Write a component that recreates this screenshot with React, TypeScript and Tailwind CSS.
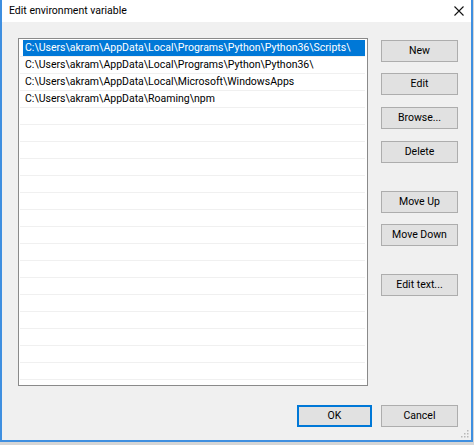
import React from 'react';

const paths = [
  'C:\\Users\\akram\\AppData\\Local\\Programs\\Python\\Python36\\Scripts\\',
  'C:\\Users\\akram\\AppData\\Local\\Programs\\Python\\Python36\\',
  'C:\\Users\\akram\\AppData\\Local\\Microsoft\\WindowsApps',
  'C:\\Users\\akram\\AppData\\Roaming\\npm',
];

const font = { fontFamily: 'Roboto, "Noto Sans", Arial, sans-serif' };

// Bouton Windows classique
const WinButton = ({ label, className = '' }: { label: string; className?: string }) => (
  <button
    className={`h-[22px] w-[77px] bg-[#e1e1e1] border border-[#adadad] text-[10.5px] leading-none text-black flex items-center justify-center ${className}`}
  >
    {label}
  </button>
);

export default function App() {
  const rows = Array.from({ length: 21 }, (_, i) => paths[i] ?? '');

  return (
    <div className="w-[474px] h-[445px] bg-[#d6d6d6] overflow-hidden" style={font}>
      <div className="w-[473px] h-[442px] flex flex-col border-x-2 border-b-2 border-[#3f8fe0] bg-[#f0f0f0]">
        {/* barre de titre */}
        <div className="h-[22px] w-full bg-white flex items-center pl-[7px]">
          <span className="flex-1 text-[10.5px] text-black">Edit environment variable</span>
          <div className="w-[24px] h-[22px] flex items-center justify-center">
            <svg width="10" height="10" viewBox="0 0 10 10">
              <path d="M0.5 0.5 L9.5 9.5 M9.5 0.5 L0.5 9.5" stroke="#111" strokeWidth="1.1" />
            </svg>
          </div>
        </div>

        <div className="flex-1 flex flex-col pt-[16px] pl-[16px] pr-[13px] relative">
          <div className="flex gap-[13px]">
            {/* liste */}
            <div className="w-[350px] h-[348px] bg-white border border-[#8a8a8a] pt-[1px] pl-[1px] pr-[2px] overflow-hidden">
              {rows.map((p, i) => (
                <div key={i} className="h-[17px] border-b border-[#f0f0f0] flex">
                  <div
                    className={`ml-[3px] flex-1 h-full flex items-center pl-[2px] text-[10.5px] whitespace-nowrap ${
                      i === 0 ? 'bg-[#0078d7] text-white' : 'text-black'
                    }`}
                  >
                    {p}
                  </div>
                </div>
              ))}
            </div>

            {/* boutons */}
            <div className="flex flex-col pt-[2px]">
              <WinButton label="New" />
              <WinButton label="Edit" className="mt-[11px]" />
              <WinButton label="Browse..." className="mt-[12px]" />
              <WinButton label="Delete" className="mt-[12px]" />
              <WinButton label="Move Up" className="mt-[28px]" />
              <WinButton label="Move Down" className="mt-[11px]" />
              <WinButton label="Edit text..." className="mt-[28px]" />
            </div>
          </div>

          <div className="flex justify-end gap-[9px] mt-[19px]">
            <button className="h-[22px] w-[75px] bg-[#e1e1e1] border-2 border-[#0078d7] text-[10.5px] text-black flex items-center justify-center">
              OK
            </button>
            <WinButton label="Cancel" />
          </div>

          {/* poignee de redimensionnement */}
          <svg width="8" height="8" viewBox="0 0 8 8" className="absolute right-[2px] bottom-[2px]">
            <rect x="6" y="0" width="1.5" height="1.5" fill="#b8b8b8" />
            <rect x="3" y="3" width="1.5" height="1.5" fill="#b8b8b8" />
            <rect x="6" y="3" width="1.5" height="1.5" fill="#b8b8b8" />
            <rect x="0" y="6" width="1.5" height="1.5" fill="#b8b8b8" />
            <rect x="3" y="6" width="1.5" height="1.5" fill="#b8b8b8" />
            <rect x="6" y="6" width="1.5" height="1.5" fill="#b8b8b8" />
          </svg>
        </div>
      </div>
    </div>
  );
}
